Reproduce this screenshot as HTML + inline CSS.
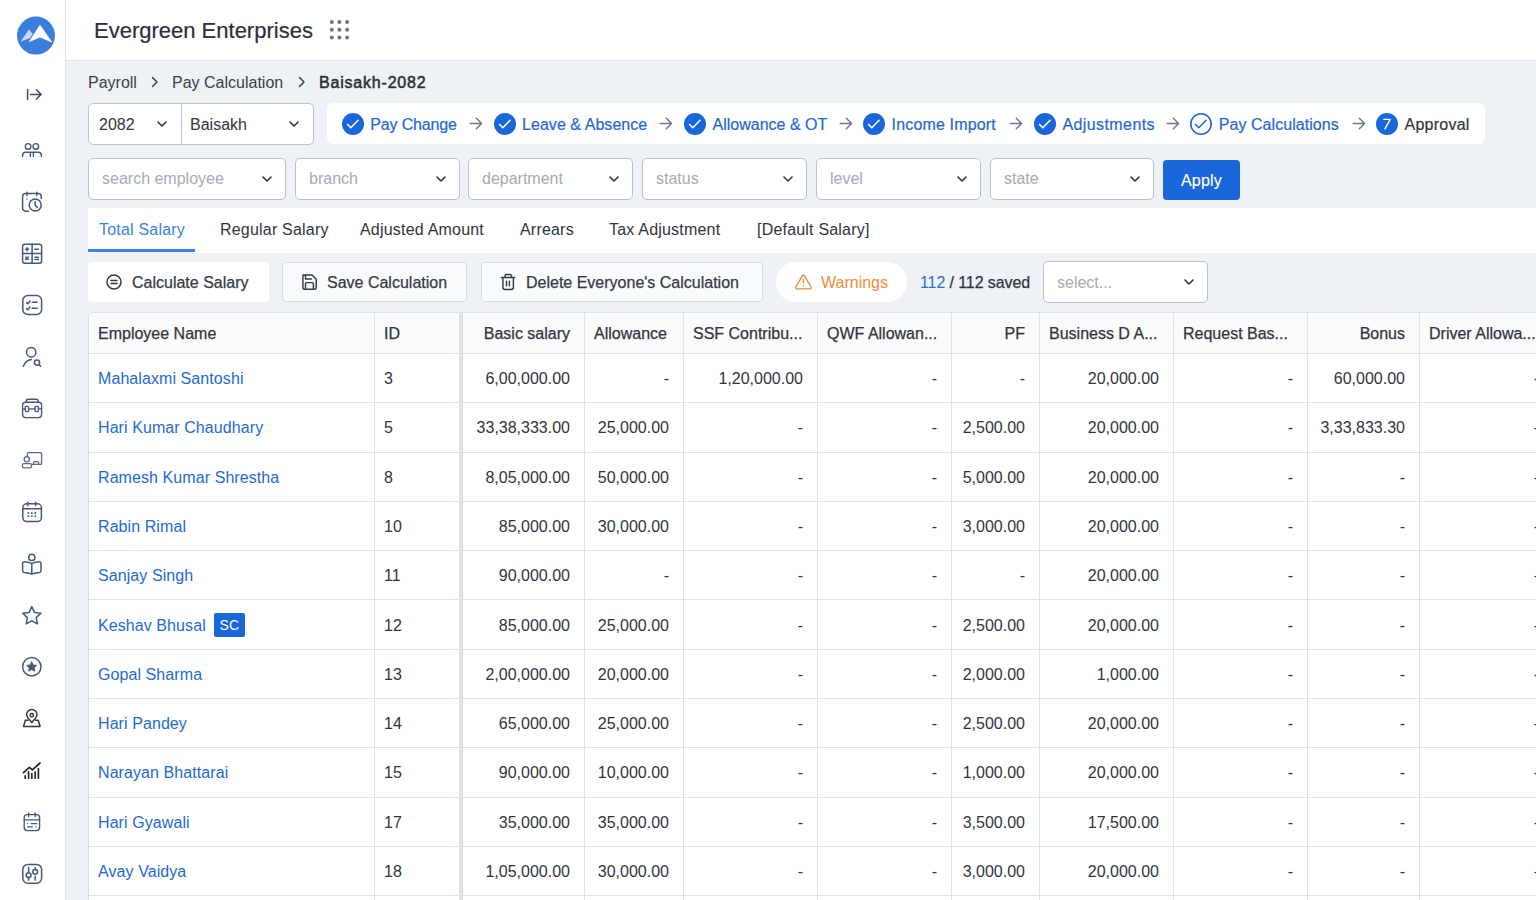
<!DOCTYPE html>
<html><head><meta charset="utf-8">
<style>
*{box-sizing:border-box;margin:0;padding:0}
html,body{width:1536px;height:900px;overflow:hidden;background:#eef1f6;font-family:"Liberation Sans",sans-serif;color:#2f3540}
.abs{position:absolute}
#side{position:absolute;left:0;top:0;width:66px;height:900px;background:#fff;border-right:1px solid #e1e6ee}
#top{position:absolute;left:66px;top:0;width:1470px;height:61px;background:#fff;border-bottom:1px solid #dfe4ec}
.title{position:absolute;left:94px;top:17px;font-size:22px;line-height:28px;color:#2b2f38;-webkit-text-stroke:0.2px #2b2f38}
.bc{position:absolute;top:73px;font-size:16px;line-height:20px;color:#3a404b}
.ymsel{position:absolute;left:88px;top:103px;width:226px;height:42px;background:#fff;border:1px solid #b9c1cd;border-radius:5px}
.ymsel .dv{position:absolute;left:92px;top:0;width:1px;height:40px;background:#b9c1cd}
.ymsel span{position:absolute;top:11px;font-size:16px;line-height:20px;color:#2f3540}
.chev{position:absolute}
.steps{position:absolute;left:327px;top:103px;width:1158px;height:41px;background:#fff;border-radius:6px}
.sic{position:absolute;top:112.5px;width:22px;height:22px}
.sic svg{display:block}
.stx{position:absolute;top:114.5px;font-size:16px;line-height:20px;color:#1f67d6;-webkit-text-stroke:0.2px #1f67d6;letter-spacing:0.25px}
.stx.dark{color:#2f3540;-webkit-text-stroke:0.2px #2f3540}
.sar{position:absolute;top:117px;width:14px;height:13px}
.sar svg{display:block}
.fsel{position:absolute;top:158px;height:42px;background:#fff;border:1px solid #b9c1cd;border-radius:5px}
.fsel span{position:absolute;left:13px;top:10px;font-size:16px;line-height:20px;color:#a3acb9}
.fsel .chev{right:13px;top:17px}
.apply{position:absolute;left:1163px;top:160px;width:77px;height:40px;background:#1a67db;border-radius:4px;color:#fff;font-size:16px;line-height:42px;text-align:center;-webkit-text-stroke:0.15px #fff;letter-spacing:0.2px}
.tabs{position:absolute;left:88px;top:208px;width:1448px;height:45px;background:#fff}
.tab{position:absolute;top:220px;font-size:16px;line-height:20px;color:#2f3540;letter-spacing:0.2px}
.tab.act{color:#3b82e6}
.uline{position:absolute;left:88px;top:249px;width:107px;height:3px;background:#3b82e6}
.btn{position:absolute;top:262px;height:40px;border-radius:4px;font-size:16px;line-height:20px;color:#343a46;-webkit-text-stroke:0.25px #343a46}
.btn.w{background:#fff}
.btn.o{background:#fafbfc;border:1px solid #d5dbe3}
.btn span{position:absolute;top:11px}
.btn.o span{top:10px}
.btn svg{position:absolute}
.warn{position:absolute;left:776px;top:262px;width:131px;height:40px;border-radius:20px;background:#fff;color:#ee8a3a;font-size:16px;line-height:20px}
.saved{position:absolute;left:920px;top:273px;letter-spacing:-0.1px;font-size:16px;line-height:20px;color:#2f3540;-webkit-text-stroke:0.25px #2f3540;white-space:nowrap}
.saved b{font-weight:normal;color:#2d6fd0;-webkit-text-stroke:0}
.selx{position:absolute;left:1043px;top:261px;width:165px;height:42px;background:#fff;border:1px solid #b9c1cd;border-radius:5px}
.selx span{position:absolute;left:13px;top:11px;font-size:16px;line-height:20px;color:#a3acb9}
.tbl{position:absolute;left:88px;top:312px;width:1472px;height:600px;overflow:hidden;border-left:1px solid #d8dee6;border-top:1px solid #dde3ea;border-top-left-radius:5px;background:#fff}
.thead{position:absolute;left:-1px;top:-1px;width:1472px;height:42px;background:#fbfbfc;border-bottom:1px solid #dde3ea}
.th{position:absolute;top:1px;height:41px;line-height:42px;padding:0 10px;font-size:16px;color:#2f3540;white-space:nowrap;-webkit-text-stroke:0.25px #2f3540}
.th.r,.td.r{text-align:right;padding-right:14px}
.tr{position:absolute;left:-1px;width:1472px;height:49.3px;border-bottom:1px solid #dde3ea}
.td{position:absolute;top:0;height:48.3px;line-height:49px;padding:0 10px;font-size:16px;color:#2f3540;white-space:nowrap}
.lnk{color:#1f6ad6;letter-spacing:0.08px}
.sc{display:inline-block;margin-left:8px;width:31px;height:24px;line-height:24px;text-align:center;background:#1a67db;color:#fff;font-size:14px;border-radius:2px;vertical-align:1px}
.vl{position:absolute;top:-1px;width:1px;height:620px;background:#dde3ea}
.vthick{position:absolute;top:-1px;width:4px;height:620px;background:#e0e4e9;border-right:1px solid #d3d9e2}
.si{position:absolute;left:20px;width:24px;height:24px}
.si svg{display:block}
</style></head><body>
<div id="side">
<svg class="abs" style="left:0;top:0" width="66" height="60" viewBox="0 0 66 60">
<circle cx="36" cy="35.6" r="19" fill="#3b7ddd"/>
<path d="M20.6 41.6 L29 29.3 L32.8 33.9 L29.8 38.3 Z" fill="#c6d8f4"/>
<path d="M29.4 41.6 L40 25.2 L51.5 41.9 L40 37 Z" fill="#fff" stroke="#fff" stroke-width="0.8" stroke-linejoin="round"/>
</svg>
<svg class="abs" style="left:0;top:60px" width="66" height="840" viewBox="0 60 66 840" fill="none" stroke="#46577a" stroke-width="1.5" stroke-linecap="round" stroke-linejoin="round">
<g stroke="#434c5c"><path d="M27.6 89.4v10.2M30.6 94.4h10.4M36.4 89.8l4.6 4.6-4.6 4.6"/></g>
<g stroke-width="1.4"><circle cx="28.1" cy="146.4" r="2.8"/><circle cx="35.8" cy="146.4" r="2.8"/><path d="M22.6 156.4v-1.2a3 3 0 0 1 3-3h12.8a3 3 0 0 1 3 3v1.2M30.4 156.4v-3M33.4 156.4v-3"/></g>
<g><path d="M28.6 211.2h-3a3 3 0 0 1-3-3v-11.6a3 3 0 0 1 3-3h12.6a3 3 0 0 1 3 3v1.8M27 192.2v3.2M36.8 192.2v3.2"/><circle cx="35.2" cy="205" r="6"/><path d="M35.2 201.6v3.8l2.2 2"/><path d="M26.8 199h.4" stroke-width="1.2"/></g>
<g><rect x="22.6" y="244.2" width="19" height="19" rx="2.2"/><path d="M32.1 244.2v19M22.6 253.6h19M25.6 249.2h3M27.1 247.7v3M35 249.2h3.4M25.8 257l2.4 2.4M28.2 257l-2.4 2.4M35 257.2h3.4M35 259.6h3.4"/></g>
<g><rect x="22.8" y="295.6" width="18.8" height="18.8" rx="5"/><path d="M26.6 302.6l1.2 1.1 2.2-2.6M26.6 308.6l1.2 1.1 2.2-2.6M32.2 302.2h5M32.2 308.2h5"/></g>
<g><circle cx="31.2" cy="352.2" r="4.7"/><path d="M23.4 366.2a10 10 0 0 1 8-6.6"/><circle cx="37" cy="362.6" r="2.6"/><path d="M38.9 364.5l1.6 1.6"/></g>
<g stroke-width="1.35"><rect x="22.6" y="402.2" width="19" height="15.4" rx="3"/><path d="M26.2 402.2v-1a2 2 0 0 1 2-2h8a2 2 0 0 1 2 2v1M22.6 408.8h2.6M28.6 408.8h6.4M38.4 408.8h3.2"/><rect x="25.2" y="406.4" width="3.4" height="5.2" rx="1"/><rect x="35" y="406.4" width="3.4" height="5.2" rx="1"/></g>
<g stroke="#5d6b87" stroke-width="1.35"><path d="M27.4 456.8v-3a1.2 1.2 0 0 1 1.2-1.2h11.8a1.2 1.2 0 0 1 1.2 1.2v9.4a1.2 1.2 0 0 1-1.2 1.2h-8.6"/><circle cx="26.8" cy="459.2" r="2.6"/><rect x="22.4" y="463.6" width="9.2" height="4.2" rx="1.6"/><path d="M33.6 464.2v-1.2a1.4 1.4 0 0 1 1.4-1.4h2.2a1.4 1.4 0 0 1 1.4 1.4v1.2"/></g>
<g><rect x="22.8" y="503.8" width="18.6" height="17.8" rx="4"/><path d="M22.8 508.8h18.6M27.8 502.2v3.2M35.6 502.2v3.2"/><g stroke-width="1.8"><path d="M28.4 513h.1M31.8 513h.1M35.2 513h.1M28.4 516.2h.1M31.8 516.2h.1M35.2 516.2h.1"/></g></g>
<g><circle cx="31.8" cy="557.4" r="3.1"/><path d="M31.8 563.6v9M31.8 563.4c-2.5-1-5.5-1.6-7.6-1.6a1.6 1.6 0 0 0-1.6 1.6v7.4c0 .9.7 1.5 1.5 1.6 2.2.1 5.2.7 7.7 1.6c2.5-.9 5.5-1.5 7.7-1.6.8-.1 1.5-.7 1.5-1.6v-7.4a1.6 1.6 0 0 0-1.6-1.6c-2.1 0-5.1.6-7.6 1.6"/></g>
<path d="M31.8 606.6l2.7 5.8 6.4.8-4.7 4.4 1.2 6.3-5.6-3.1-5.6 3.1 1.2-6.3-4.7-4.4 6.4-.8z"/>
<g><circle cx="31.8" cy="666.8" r="9.2"/><path d="M31.7 661.8l1.5 3.1 3.5.5-2.5 2.4.6 3.4-3.1-1.6-3.1 1.6.6-3.4-2.5-2.4 3.5-.5z" fill="#46577a" stroke-width="0.8"/></g>
<g stroke="#2f3440"><path d="M31.8 722.4c-2.8-2.8-5.2-5.6-5.2-7.8a5.2 5.2 0 0 1 10.4 0c0 2.2-2.4 5-5.2 7.8z"/><circle cx="31.8" cy="715.2" r="1.7"/><path d="M28 720.3h-2.6l-1.8 5.8c-.1.3.1.5.4.5h15.6c.3 0 .5-.2.4-.5l-1.8-5.8h-2.6"/></g>
<g stroke="#23272f" stroke-width="1.7"><path d="M23.4 772.6l6-5.2 3 2.4 7.6-6.8M25.2 775.8v2.4M28.6 771.8v6.4M31.8 773.6v4.6M35.2 772v6.2M38.4 768.6v9.6"/></g>
<g stroke-width="1.35"><rect x="24.2" y="814.6" width="15.4" height="16" rx="3"/><path d="M24.2 819.8h15.4M28.6 813v3.6M35.2 813v3.6M27.6 823.6h.1M31.2 823.6h5.4M27.6 826.8h4.8M35.8 826.8h.1"/></g>
<g><rect x="22.8" y="864.4" width="18.8" height="18.8" rx="5"/><path d="M28.6 867.6v4.4M35.2 876.4v3.6M35.2 867.4v2"/><circle cx="28.6" cy="875.2" r="2.4"/><circle cx="35.2" cy="871.8" r="2.4"/><path d="M28.6 877.6v2.6"/></g>
</svg>
</div>
<div id="top"></div>
<div class="title">Evergreen Enterprises</div>
<svg class="abs" style="left:326px;top:16px" width="28" height="28" viewBox="326 16 28 28" fill="#6b7280">
<circle cx="331.8" cy="22.1" r="2"/><circle cx="339.4" cy="22.1" r="2"/><circle cx="347.1" cy="22.1" r="2"/>
<circle cx="331.8" cy="29.8" r="2"/><circle cx="339.4" cy="29.8" r="2"/><circle cx="347.1" cy="29.8" r="2"/>
<circle cx="331.8" cy="37.6" r="2"/><circle cx="339.4" cy="37.6" r="2"/><circle cx="347.1" cy="37.6" r="2"/>
</svg>
<div class="bc" style="left:88px">Payroll</div>
<svg class="abs" style="left:150.8px;top:76px" width="8" height="12" viewBox="0 0 8 12"><path d="M1.5 1.5L6 6l-4.5 4.5" fill="none" stroke="#3a404b" stroke-width="1.5" stroke-linecap="round" stroke-linejoin="round"/></svg>
<div class="bc" style="left:172px">Pay Calculation</div>
<svg class="abs" style="left:297.8px;top:76px" width="8" height="12" viewBox="0 0 8 12"><path d="M1.5 1.5L6 6l-4.5 4.5" fill="none" stroke="#3a404b" stroke-width="1.5" stroke-linecap="round" stroke-linejoin="round"/></svg>
<div class="bc" style="left:319px;color:#2b2f38;-webkit-text-stroke:0.5px #2b2f38;letter-spacing:0.8px">Baisakh-2082</div>
<div class="ymsel"><span style="left:10px">2082</span><svg class="chev" style="left:68px;top:17px" width="10" height="6" viewBox="0 0 10 6"><path d="M1 1l4 4 4-4" fill="none" stroke="#2f3540" stroke-width="1.6" stroke-linecap="round" stroke-linejoin="round"/></svg><div class="dv"></div><span style="left:101px">Baisakh</span><svg class="chev" style="left:200px;top:17px" width="10" height="6" viewBox="0 0 10 6"><path d="M1 1l4 4 4-4" fill="none" stroke="#2f3540" stroke-width="1.6" stroke-linecap="round" stroke-linejoin="round"/></svg></div>
<div class="steps"></div>
<div class="sic" style="left:342px"><svg width="22" height="22" viewBox="0 0 22 22"><circle cx="11" cy="11" r="11" fill="#1a67db"/><path d="M5.6 11.4l3.2 3.4 7.3-7.6" fill="none" stroke="#fff" stroke-width="1.5" stroke-linecap="round" stroke-linejoin="round"/></svg></div><div class="stx" style="left:370.3px;letter-spacing:-0.15px">Pay Change</div>
<div class="sic" style="left:493.8px"><svg width="22" height="22" viewBox="0 0 22 22"><circle cx="11" cy="11" r="11" fill="#1a67db"/><path d="M5.6 11.4l3.2 3.4 7.3-7.6" fill="none" stroke="#fff" stroke-width="1.5" stroke-linecap="round" stroke-linejoin="round"/></svg></div><div class="stx" style="left:522px;letter-spacing:0.05px">Leave &amp; Absence</div>
<div class="sic" style="left:684px"><svg width="22" height="22" viewBox="0 0 22 22"><circle cx="11" cy="11" r="11" fill="#1a67db"/><path d="M5.6 11.4l3.2 3.4 7.3-7.6" fill="none" stroke="#fff" stroke-width="1.5" stroke-linecap="round" stroke-linejoin="round"/></svg></div><div class="stx" style="left:712.5px;letter-spacing:0px">Allowance &amp; OT</div>
<div class="sic" style="left:863px"><svg width="22" height="22" viewBox="0 0 22 22"><circle cx="11" cy="11" r="11" fill="#1a67db"/><path d="M5.6 11.4l3.2 3.4 7.3-7.6" fill="none" stroke="#fff" stroke-width="1.5" stroke-linecap="round" stroke-linejoin="round"/></svg></div><div class="stx" style="left:891.6px;letter-spacing:0.15px">Income Import</div>
<div class="sic" style="left:1034px"><svg width="22" height="22" viewBox="0 0 22 22"><circle cx="11" cy="11" r="11" fill="#1a67db"/><path d="M5.6 11.4l3.2 3.4 7.3-7.6" fill="none" stroke="#fff" stroke-width="1.5" stroke-linecap="round" stroke-linejoin="round"/></svg></div><div class="stx" style="left:1062.5px;letter-spacing:0.4px">Adjustments</div>
<div class="sic" style="left:1190.3px"><svg width="22" height="22" viewBox="0 0 22 22"><circle cx="11" cy="11" r="10.2" fill="none" stroke="#1a67db" stroke-width="1.6"/><path d="M5.6 11.4l3.2 3.4 7.3-7.6" fill="none" stroke="#1a67db" stroke-width="1.5" stroke-linecap="round" stroke-linejoin="round"/></svg></div><div class="stx" style="left:1218.8px;letter-spacing:0.05px">Pay Calculations</div>
<div class="sar" style="left:469.4px"><svg class="arr" width="14" height="13" viewBox="0 0 14 13"><path d="M1.2 6.5h11.2M7.3 1.2l5.3 5.3-5.3 5.3" fill="none" stroke="#6b778c" stroke-width="1.4" stroke-linecap="round" stroke-linejoin="round"/></svg></div>
<div class="sar" style="left:659.4px"><svg class="arr" width="14" height="13" viewBox="0 0 14 13"><path d="M1.2 6.5h11.2M7.3 1.2l5.3 5.3-5.3 5.3" fill="none" stroke="#6b778c" stroke-width="1.4" stroke-linecap="round" stroke-linejoin="round"/></svg></div>
<div class="sar" style="left:838.8px"><svg class="arr" width="14" height="13" viewBox="0 0 14 13"><path d="M1.2 6.5h11.2M7.3 1.2l5.3 5.3-5.3 5.3" fill="none" stroke="#6b778c" stroke-width="1.4" stroke-linecap="round" stroke-linejoin="round"/></svg></div>
<div class="sar" style="left:1009.4px"><svg class="arr" width="14" height="13" viewBox="0 0 14 13"><path d="M1.2 6.5h11.2M7.3 1.2l5.3 5.3-5.3 5.3" fill="none" stroke="#6b778c" stroke-width="1.4" stroke-linecap="round" stroke-linejoin="round"/></svg></div>
<div class="sar" style="left:1166px"><svg class="arr" width="14" height="13" viewBox="0 0 14 13"><path d="M1.2 6.5h11.2M7.3 1.2l5.3 5.3-5.3 5.3" fill="none" stroke="#6b778c" stroke-width="1.4" stroke-linecap="round" stroke-linejoin="round"/></svg></div>
<div class="sar" style="left:1351.5px"><svg class="arr" width="14" height="13" viewBox="0 0 14 13"><path d="M1.2 6.5h11.2M7.3 1.2l5.3 5.3-5.3 5.3" fill="none" stroke="#6b778c" stroke-width="1.4" stroke-linecap="round" stroke-linejoin="round"/></svg></div>
<div class="sic" style="left:1376px"><svg width="22" height="22" viewBox="0 0 22 22"><circle cx="11" cy="11" r="11" fill="#1a67db"/><path d="M7.2 6.4h7L8.7 16.4" fill="none" stroke="#fff" stroke-width="1.4" stroke-linejoin="round"/></svg></div><div class="stx dark" style="left:1404.5px">Approval</div>
<div class="fsel" style="left:88px;width:198px"><span>search employee</span><svg class="chev" width="10" height="6" viewBox="0 0 10 6"><path d="M1 1l4 4 4-4" fill="none" stroke="#2f3540" stroke-width="1.6" stroke-linecap="round" stroke-linejoin="round"/></svg></div>
<div class="fsel" style="left:295px;width:165px"><span>branch</span><svg class="chev" width="10" height="6" viewBox="0 0 10 6"><path d="M1 1l4 4 4-4" fill="none" stroke="#2f3540" stroke-width="1.6" stroke-linecap="round" stroke-linejoin="round"/></svg></div>
<div class="fsel" style="left:468px;width:165px"><span>department</span><svg class="chev" width="10" height="6" viewBox="0 0 10 6"><path d="M1 1l4 4 4-4" fill="none" stroke="#2f3540" stroke-width="1.6" stroke-linecap="round" stroke-linejoin="round"/></svg></div>
<div class="fsel" style="left:642px;width:165px"><span>status</span><svg class="chev" width="10" height="6" viewBox="0 0 10 6"><path d="M1 1l4 4 4-4" fill="none" stroke="#2f3540" stroke-width="1.6" stroke-linecap="round" stroke-linejoin="round"/></svg></div>
<div class="fsel" style="left:816px;width:165px"><span>level</span><svg class="chev" width="10" height="6" viewBox="0 0 10 6"><path d="M1 1l4 4 4-4" fill="none" stroke="#2f3540" stroke-width="1.6" stroke-linecap="round" stroke-linejoin="round"/></svg></div>
<div class="fsel" style="left:990px;width:164px"><span>state</span><svg class="chev" width="10" height="6" viewBox="0 0 10 6"><path d="M1 1l4 4 4-4" fill="none" stroke="#2f3540" stroke-width="1.6" stroke-linecap="round" stroke-linejoin="round"/></svg></div>
<div class="apply">Apply</div>
<div class="tabs"></div>
<div class="tab act" style="left:99px">Total Salary</div>
<div class="tab" style="left:220px">Regular Salary</div>
<div class="tab" style="left:360px">Adjusted Amount</div>
<div class="tab" style="left:520px">Arrears</div>
<div class="tab" style="left:609px">Tax Adjustment</div>
<div class="tab" style="left:757px">[Default Salary]</div>
<div class="uline"></div>
<div class="btn w" style="left:88px;width:181px"><svg style="left:18px;top:12px" width="16" height="16" viewBox="0 0 16 16"><circle cx="8" cy="8" r="7" fill="none" stroke="#343a46" stroke-width="1.5"/><path d="M5 6.5h6M5 9.5h6" stroke="#343a46" stroke-width="1.5" stroke-linecap="round"/></svg><span style="left:44px">Calculate Salary</span></div>
<div class="btn o" style="left:282px;width:185px"><svg style="left:17px;top:9px" width="20" height="20" viewBox="300 272 20 20"><path d="M302.9 274.9h9.2l4.1 4.3v8.6a1.5 1.5 0 0 1-1.5 1.5h-10.3a1.5 1.5 0 0 1-1.5-1.5v-11.4a1.5 1.5 0 0 1 1.5-1.5z" fill="none" stroke="#343a46" stroke-width="1.45" stroke-linejoin="round"/><path d="M305.5 274.9v4.1h6M305.5 289.2v-5.2a1.4 1.4 0 0 1 1.4-1.4h5.1a1.4 1.4 0 0 1 1.4 1.4v5.2" fill="none" stroke="#343a46" stroke-width="1.45" stroke-linejoin="round" stroke-linecap="round"/></svg><span style="left:44px">Save Calculation</span></div>
<div class="btn o" style="left:481px;width:282px"><svg style="left:16px;top:9px" width="20" height="20" viewBox="498 272 20 20"><path d="M501.3 277.5h13.4M505 277.3v-1.4a1.5 1.5 0 0 1 1.5-1.5h3.4a1.5 1.5 0 0 1 1.5 1.5v1.4M502.9 277.7v9.6a2.2 2.2 0 0 0 2.2 2.2h6.1a2.2 2.2 0 0 0 2.2-2.2v-9.6M506.5 281.1v4.6M509.4 281.1v4.6" fill="none" stroke="#343a46" stroke-width="1.45" stroke-linejoin="round" stroke-linecap="round"/></svg><span style="left:44px">Delete Everyone's Calculation</span></div>
<div class="warn"><svg class="abs" style="left:14px;top:8px" width="24" height="24" viewBox="790 270 24 24"><path d="M802.3 275.9a1.3 1.3 0 0 1 2.2 0l6.6 11.1a1.3 1.3 0 0 1-1.1 1.9h-13.2a1.3 1.3 0 0 1-1.1-1.9z" fill="none" stroke="#ee8a3a" stroke-width="1.4" stroke-linejoin="round"/><path d="M803.4 279.3v3.3M803.4 285.3v.1" stroke="#ee8a3a" stroke-width="1.4" stroke-linecap="round"/></svg><span class="abs" style="left:45px;top:11px">Warnings</span></div>
<div class="saved"><b>112</b> / 112 saved</div>
<div class="selx"><span>select...</span><svg class="chev" style="left:140px;top:17px" width="10" height="6" viewBox="0 0 10 6"><path d="M1 1l4 4 4-4" fill="none" stroke="#2f3540" stroke-width="1.6" stroke-linecap="round" stroke-linejoin="round"/></svg></div>
<div class="tbl">
<div class="thead">
<div class="th l" style="left:0px;width:286px">Employee Name</div>
<div class="th l" style="left:286px;width:85px">ID</div>
<div class="th r" style="left:371px;width:125px">Basic salary</div>
<div class="th l" style="left:496px;width:99px">Allowance</div>
<div class="th l" style="left:595px;width:134px">SSF Contribu...</div>
<div class="th l" style="left:729px;width:134px">QWF Allowan...</div>
<div class="th r" style="left:863px;width:88px">PF</div>
<div class="th l" style="left:951px;width:134px">Business D A...</div>
<div class="th l" style="left:1085px;width:134px">Request Bas...</div>
<div class="th r" style="left:1219px;width:112px">Bonus</div>
<div class="th l" style="left:1331px;width:134px">Driver Allowa...</div>
</div>
<div class="tr" style="top:41.00px">
<div class="td l" style="left:0px;width:286px"><span class="lnk">Mahalaxmi Santoshi</span></div>
<div class="td l" style="left:286px;width:85px">3</div>
<div class="td r" style="left:371px;width:125px">6,00,000.00</div>
<div class="td r" style="left:496px;width:99px">-</div>
<div class="td r" style="left:595px;width:134px">1,20,000.00</div>
<div class="td r" style="left:729px;width:134px">-</div>
<div class="td r" style="left:863px;width:88px">-</div>
<div class="td r" style="left:951px;width:134px">20,000.00</div>
<div class="td r" style="left:1085px;width:134px">-</div>
<div class="td r" style="left:1219px;width:112px">60,000.00</div>
<div class="td r" style="left:1331px;width:134px">-</div>
</div>
<div class="tr" style="top:90.30px">
<div class="td l" style="left:0px;width:286px"><span class="lnk">Hari Kumar Chaudhary</span></div>
<div class="td l" style="left:286px;width:85px">5</div>
<div class="td r" style="left:371px;width:125px">33,38,333.00</div>
<div class="td r" style="left:496px;width:99px">25,000.00</div>
<div class="td r" style="left:595px;width:134px">-</div>
<div class="td r" style="left:729px;width:134px">-</div>
<div class="td r" style="left:863px;width:88px">2,500.00</div>
<div class="td r" style="left:951px;width:134px">20,000.00</div>
<div class="td r" style="left:1085px;width:134px">-</div>
<div class="td r" style="left:1219px;width:112px">3,33,833.30</div>
<div class="td r" style="left:1331px;width:134px">-</div>
</div>
<div class="tr" style="top:139.60px">
<div class="td l" style="left:0px;width:286px"><span class="lnk">Ramesh Kumar Shrestha</span></div>
<div class="td l" style="left:286px;width:85px">8</div>
<div class="td r" style="left:371px;width:125px">8,05,000.00</div>
<div class="td r" style="left:496px;width:99px">50,000.00</div>
<div class="td r" style="left:595px;width:134px">-</div>
<div class="td r" style="left:729px;width:134px">-</div>
<div class="td r" style="left:863px;width:88px">5,000.00</div>
<div class="td r" style="left:951px;width:134px">20,000.00</div>
<div class="td r" style="left:1085px;width:134px">-</div>
<div class="td r" style="left:1219px;width:112px">-</div>
<div class="td r" style="left:1331px;width:134px">-</div>
</div>
<div class="tr" style="top:188.90px">
<div class="td l" style="left:0px;width:286px"><span class="lnk">Rabin Rimal</span></div>
<div class="td l" style="left:286px;width:85px">10</div>
<div class="td r" style="left:371px;width:125px">85,000.00</div>
<div class="td r" style="left:496px;width:99px">30,000.00</div>
<div class="td r" style="left:595px;width:134px">-</div>
<div class="td r" style="left:729px;width:134px">-</div>
<div class="td r" style="left:863px;width:88px">3,000.00</div>
<div class="td r" style="left:951px;width:134px">20,000.00</div>
<div class="td r" style="left:1085px;width:134px">-</div>
<div class="td r" style="left:1219px;width:112px">-</div>
<div class="td r" style="left:1331px;width:134px">-</div>
</div>
<div class="tr" style="top:238.20px">
<div class="td l" style="left:0px;width:286px"><span class="lnk">Sanjay Singh</span></div>
<div class="td l" style="left:286px;width:85px">11</div>
<div class="td r" style="left:371px;width:125px">90,000.00</div>
<div class="td r" style="left:496px;width:99px">-</div>
<div class="td r" style="left:595px;width:134px">-</div>
<div class="td r" style="left:729px;width:134px">-</div>
<div class="td r" style="left:863px;width:88px">-</div>
<div class="td r" style="left:951px;width:134px">20,000.00</div>
<div class="td r" style="left:1085px;width:134px">-</div>
<div class="td r" style="left:1219px;width:112px">-</div>
<div class="td r" style="left:1331px;width:134px">-</div>
</div>
<div class="tr" style="top:287.50px">
<div class="td l" style="left:0px;width:286px"><span class="lnk">Keshav Bhusal</span><span class="sc">SC</span></div>
<div class="td l" style="left:286px;width:85px">12</div>
<div class="td r" style="left:371px;width:125px">85,000.00</div>
<div class="td r" style="left:496px;width:99px">25,000.00</div>
<div class="td r" style="left:595px;width:134px">-</div>
<div class="td r" style="left:729px;width:134px">-</div>
<div class="td r" style="left:863px;width:88px">2,500.00</div>
<div class="td r" style="left:951px;width:134px">20,000.00</div>
<div class="td r" style="left:1085px;width:134px">-</div>
<div class="td r" style="left:1219px;width:112px">-</div>
<div class="td r" style="left:1331px;width:134px">-</div>
</div>
<div class="tr" style="top:336.80px">
<div class="td l" style="left:0px;width:286px"><span class="lnk">Gopal Sharma</span></div>
<div class="td l" style="left:286px;width:85px">13</div>
<div class="td r" style="left:371px;width:125px">2,00,000.00</div>
<div class="td r" style="left:496px;width:99px">20,000.00</div>
<div class="td r" style="left:595px;width:134px">-</div>
<div class="td r" style="left:729px;width:134px">-</div>
<div class="td r" style="left:863px;width:88px">2,000.00</div>
<div class="td r" style="left:951px;width:134px">1,000.00</div>
<div class="td r" style="left:1085px;width:134px">-</div>
<div class="td r" style="left:1219px;width:112px">-</div>
<div class="td r" style="left:1331px;width:134px">-</div>
</div>
<div class="tr" style="top:386.10px">
<div class="td l" style="left:0px;width:286px"><span class="lnk">Hari Pandey</span></div>
<div class="td l" style="left:286px;width:85px">14</div>
<div class="td r" style="left:371px;width:125px">65,000.00</div>
<div class="td r" style="left:496px;width:99px">25,000.00</div>
<div class="td r" style="left:595px;width:134px">-</div>
<div class="td r" style="left:729px;width:134px">-</div>
<div class="td r" style="left:863px;width:88px">2,500.00</div>
<div class="td r" style="left:951px;width:134px">20,000.00</div>
<div class="td r" style="left:1085px;width:134px">-</div>
<div class="td r" style="left:1219px;width:112px">-</div>
<div class="td r" style="left:1331px;width:134px">-</div>
</div>
<div class="tr" style="top:435.40px">
<div class="td l" style="left:0px;width:286px"><span class="lnk">Narayan Bhattarai</span></div>
<div class="td l" style="left:286px;width:85px">15</div>
<div class="td r" style="left:371px;width:125px">90,000.00</div>
<div class="td r" style="left:496px;width:99px">10,000.00</div>
<div class="td r" style="left:595px;width:134px">-</div>
<div class="td r" style="left:729px;width:134px">-</div>
<div class="td r" style="left:863px;width:88px">1,000.00</div>
<div class="td r" style="left:951px;width:134px">20,000.00</div>
<div class="td r" style="left:1085px;width:134px">-</div>
<div class="td r" style="left:1219px;width:112px">-</div>
<div class="td r" style="left:1331px;width:134px">-</div>
</div>
<div class="tr" style="top:484.70px">
<div class="td l" style="left:0px;width:286px"><span class="lnk">Hari Gyawali</span></div>
<div class="td l" style="left:286px;width:85px">17</div>
<div class="td r" style="left:371px;width:125px">35,000.00</div>
<div class="td r" style="left:496px;width:99px">35,000.00</div>
<div class="td r" style="left:595px;width:134px">-</div>
<div class="td r" style="left:729px;width:134px">-</div>
<div class="td r" style="left:863px;width:88px">3,500.00</div>
<div class="td r" style="left:951px;width:134px">17,500.00</div>
<div class="td r" style="left:1085px;width:134px">-</div>
<div class="td r" style="left:1219px;width:112px">-</div>
<div class="td r" style="left:1331px;width:134px">-</div>
</div>
<div class="tr" style="top:534.00px">
<div class="td l" style="left:0px;width:286px"><span class="lnk">Avay Vaidya</span></div>
<div class="td l" style="left:286px;width:85px">18</div>
<div class="td r" style="left:371px;width:125px">1,05,000.00</div>
<div class="td r" style="left:496px;width:99px">30,000.00</div>
<div class="td r" style="left:595px;width:134px">-</div>
<div class="td r" style="left:729px;width:134px">-</div>
<div class="td r" style="left:863px;width:88px">3,000.00</div>
<div class="td r" style="left:951px;width:134px">20,000.00</div>
<div class="td r" style="left:1085px;width:134px">-</div>
<div class="td r" style="left:1219px;width:112px">-</div>
<div class="td r" style="left:1331px;width:134px">-</div>
</div>
<div class="tr" style="top:583.30px">
<div class="td l" style="left:0px;width:286px"><span class="lnk"></span></div>
<div class="td l" style="left:286px;width:85px"></div>
<div class="td r" style="left:371px;width:125px"></div>
<div class="td r" style="left:496px;width:99px"></div>
<div class="td r" style="left:595px;width:134px"></div>
<div class="td r" style="left:729px;width:134px"></div>
<div class="td r" style="left:863px;width:88px"></div>
<div class="td r" style="left:951px;width:134px"></div>
<div class="td r" style="left:1085px;width:134px"></div>
<div class="td r" style="left:1219px;width:112px"></div>
<div class="td r" style="left:1331px;width:134px"></div>
</div>
<div class="vl" style="left:285px"></div>
<div class="vthick" style="left:370px"></div>
<div class="vl" style="left:495px"></div>
<div class="vl" style="left:594px"></div>
<div class="vl" style="left:728px"></div>
<div class="vl" style="left:862px"></div>
<div class="vl" style="left:950px"></div>
<div class="vl" style="left:1084px"></div>
<div class="vl" style="left:1218px"></div>
<div class="vl" style="left:1330px"></div>
</div>
</body></html>
